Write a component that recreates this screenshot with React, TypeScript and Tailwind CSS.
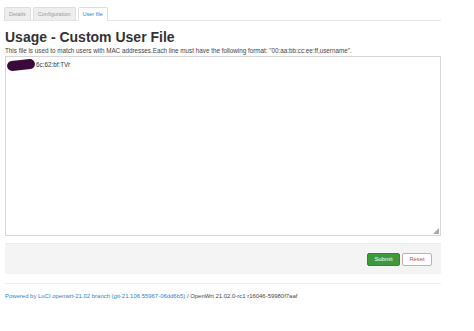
import React from 'react';

const font = { fontFamily: '"Liberation Sans", Arial, sans-serif' };

export default function App() {
  return (
    <div className="w-[474px] h-[331px] bg-white overflow-hidden" style={font}>
      <div className="w-[437px] ml-[4px] pt-[7px]">
        {/* tabs */}
        <div className="flex gap-[2px] border-b border-[#e4e4e4] h-[14px] items-end">
          <div className="h-[13px] px-[4px] flex items-center bg-[#eeeeee] border border-[#dddddd] border-b-0 rounded-t-[2px] text-[5.5px] text-[#999]">Details</div>
          <div className="h-[13px] px-[4px] flex items-center bg-[#eeeeee] border border-[#dddddd] border-b-0 rounded-t-[2px] text-[5.5px] text-[#999]">Configuration</div>
          <div className="h-[14px] px-[4px] flex items-center bg-white border border-[#dddddd] border-b-white rounded-t-[2px] text-[5.5px] text-[#2a7fd4] -mb-px">User file</div>
        </div>

        <div className="pl-[1px]">
          <h2 className="mt-[8px] text-[14px] leading-[16px] font-bold text-[#333]">Usage - Custom User File</h2>
          <p className="mt-[2px] text-[6.3px] leading-[7px] text-[#444] whitespace-nowrap">
            This file is used to match users with MAC addresses.Each line must have the following format: "00:aa:bb:cc:ee:ff,username".
          </p>

          <div className="relative mt-[2px] h-[180px] border border-[#d6d6d6] bg-white">
            <div className="flex items-center pt-[3px] pl-[1px]">
              <div className="w-[28px] h-[10px] rounded-full bg-[#3a0a3a] -rotate-6"></div>
              <span className="text-[6.3px] text-[#333] ml-[1px]">6c:62:bf:TVr</span>
            </div>
            <div className="absolute right-[1px] bottom-[1px] w-0 h-0 border-l-[6px] border-l-transparent border-b-[6px] border-b-[#a8a8a8]"></div>
          </div>

          <div className="mt-[7px] h-[31px] bg-[#f4f4f4] border-t border-[#ececec] flex items-center justify-end gap-[2px] pr-[9px]">
            <div className="w-[33px] h-[13px] flex items-center justify-center bg-[#3c9a3c] border border-[#2f8a2f] rounded-[2px] text-[5.8px] text-white">Submit</div>
            <div className="w-[30px] h-[13px] flex items-center justify-center bg-white border border-[#e0a0a8] rounded-[2px] text-[5.8px] text-[#c0505a]">Reset</div>
          </div>

          <div className="mt-[9px] border-t border-[#eeeeee]"></div>
          <p className="mt-[9px] text-[5.95px] leading-[7px] text-[#444] whitespace-nowrap">
            <span className="text-[#2a7fd4]">Powered by LuCI openwrt-21.02 branch (git-21.106.55967-06dd6b5)</span> / OpenWrt 21.02.0-rc1 r16046-59980f7aaf
          </p>
        </div>
      </div>
    </div>
  );
}
